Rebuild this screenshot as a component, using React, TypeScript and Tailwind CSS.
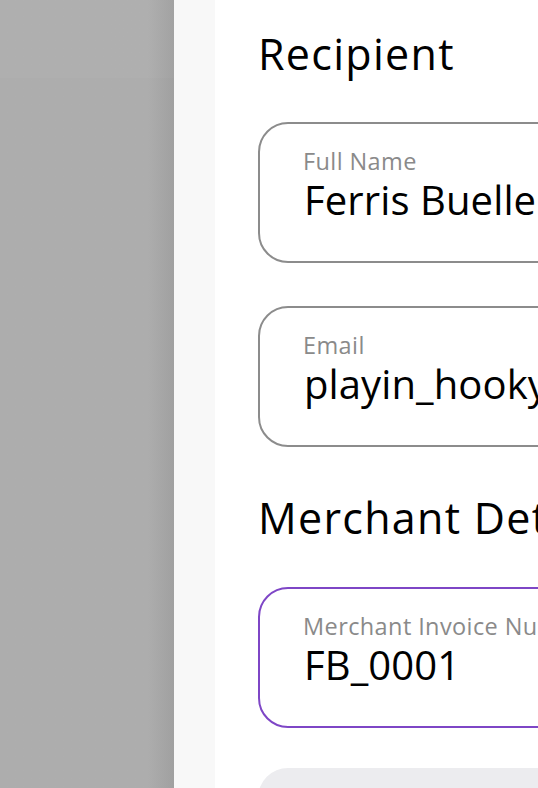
import React from 'react';

const font = { fontFamily: '"Open Sans", "Noto Sans", sans-serif' };

interface FieldProps {
  label: string;
  value: string;
  active?: boolean;
}

const Field: React.FC<FieldProps> = ({ label, value, active }) => (
  <div
    className={`h-[141px] w-[420px] shrink-0 rounded-[30px] border-2 bg-white pl-[43px] pt-[22px] ${
      active ? 'border-[#7e46c6]' : 'border-[#8c8c8c]'
    }`}
  >
    <div className="whitespace-nowrap text-[23.5px] leading-[30px] tracking-[0.4px] text-[#8a8a8a]">{label}</div>
    <div className="whitespace-nowrap pl-[1px] text-[40px] leading-[48px] tracking-[0.1px] text-black">{value}</div>
  </div>
);

export default function App() {
  return (
    <div className="flex h-[788px] w-[538px] overflow-hidden bg-white" style={font}>
      <div className="flex w-[174px] shrink-0 flex-col">
        <div className="h-[78px] bg-gradient-to-r from-[#afafaf] from-85% to-[#a2a2a2]" />
        <div className="flex-1 bg-gradient-to-r from-[#adadad] from-85% to-[#a0a0a0]" />
      </div>
      <div className="w-[41px] shrink-0 bg-[#f8f8f8]" />
      <div className="flex min-w-0 flex-1 flex-col pl-[43px]">
        <h2 className="mt-[25px] whitespace-nowrap text-[43px] leading-[58px] tracking-[1.3px] text-black">Recipient</h2>
        <div className="mt-[39px] flex flex-col gap-[43px]">
          <Field label="Full Name" value="Ferris Bueller" />
          <Field label="Email" value="playin_hooky@example.com" />
        </div>
        <h2 className="mt-[42px] whitespace-nowrap text-[43px] leading-[58px] tracking-[1.3px] text-black">Merchant Details</h2>
        <div className="mt-[40px] flex flex-col gap-[40px]">
          <Field label="Merchant Invoice Number" value="FB_0001" active />
          <div className="h-[141px] w-[420px] shrink-0 rounded-[30px] bg-[#ececef]" />
        </div>
      </div>
    </div>
  );
}
